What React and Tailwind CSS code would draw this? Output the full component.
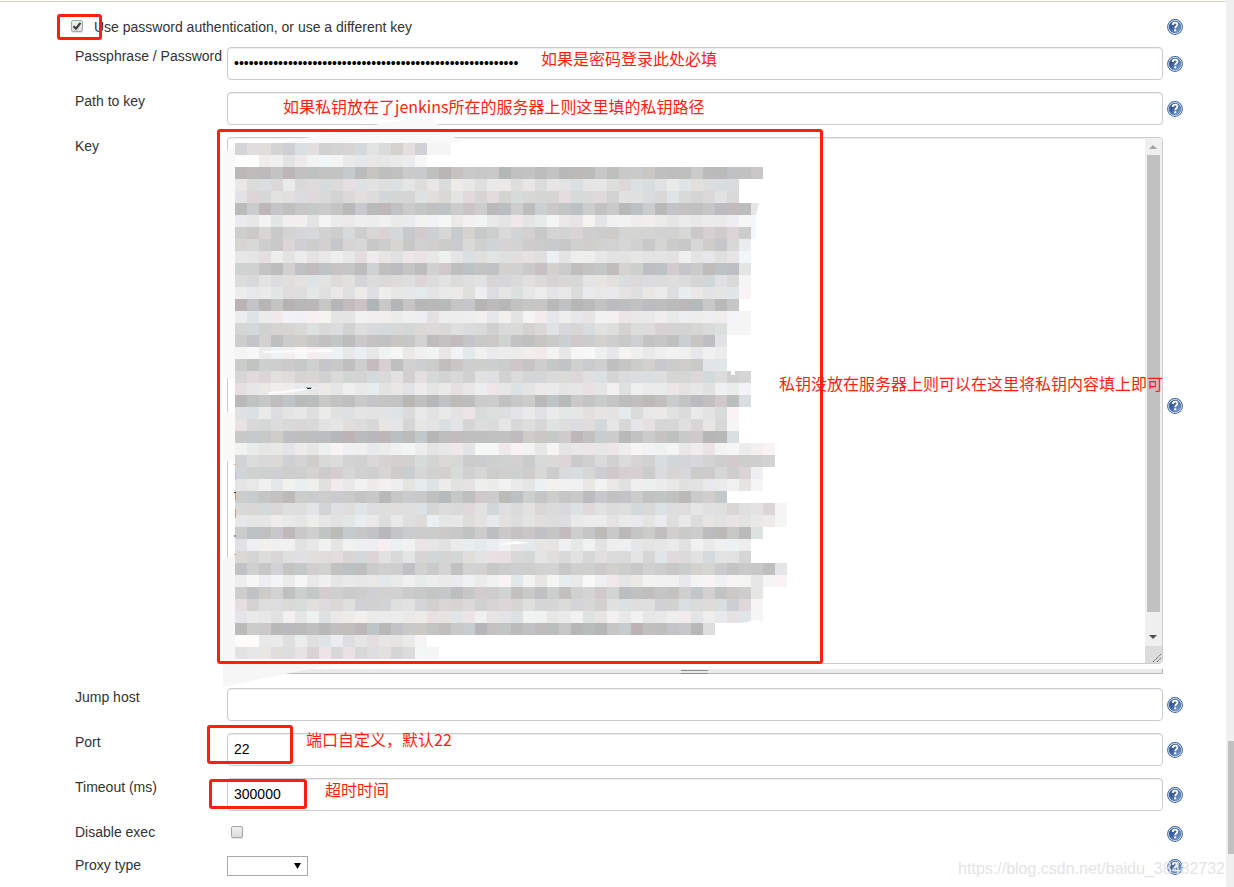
import React from "react";

const CELL = 12;

// Mosaic rows from top to bottom: [first column, column count, grey level, pale columns at the end]
const MOSAIC_ROWS = [
  [0, 18, 217, 2], [2, 14, 236, 1], [0, 44, 192, 0], [0, 42, 226, 0],
  [0, 42, 219, 0], [0, 43, 195, 0], [0, 43, 236, 0], [0, 43, 208, 0],
  [0, 43, 208, 1], [0, 43, 230, 1], [0, 43, 199, 1], [0, 43, 221, 1],
  [0, 43, 229, 1], [0, 42, 190, 0], [0, 43, 235, 2], [0, 43, 217, 2],
  [0, 41, 200, 1], [0, 41, 238, 0], [0, 41, 201, 2], [0, 43, 216, 0],
  [0, 43, 232, 1], [0, 43, 193, 1], [0, 42, 226, 1], [0, 42, 222, 1],
  [0, 42, 193, 1], [0, 45, 237, 1], [0, 45, 211, 0], [0, 44, 211, 1],
  [0, 44, 233, 1], [0, 41, 196, 0], [0, 46, 220, 1], [0, 46, 229, 1],
  [0, 44, 196, 1], [0, 43, 233, 0], [0, 43, 220, 0], [0, 46, 201, 1],
  [0, 46, 238, 2], [0, 44, 201, 1], [0, 44, 217, 1], [0, 44, 233, 1],
  [0, 40, 193, 1], [2, 14, 231, 1], [0, 17, 222, 2],
];

const TINTS = [
  [0, 0, 0], [0, 0, 0], [0, 0, 0], [1, 0, -1], [0, 0, 1], [0, 1, 0], [1, 1, 0],
  [-1, 0, 2], [0, 0, 0], [-2, 2, 1], [2, -1, 0], [-1, -1, 3], [2, 1, -3],
  [-4, 2, 3], [5, -3, -1],
];

function buildMosaic() {
  let seed = 90217;
  const next = () => {
    seed = (seed * 1103515245 + 12345) % 2147483648;
    return seed / 2147483648;
  };
  const cells = [];
  MOSAIC_ROWS.forEach(([start, count, level, pale], row) => {
    for (let i = 0; i < count; i += 1) {
      const spread = level < 205 ? 22 : 18;
      let base = level + Math.round((next() - 0.5) * spread);
      const tint = TINTS[Math.floor(next() * TINTS.length)];
      if (i >= count - pale) base = Math.min(245, level + 28);
      const rgb = tint.map((t) => Math.min(250, base + t));
      cells.push({
        key: `${row}-${i}`,
        x: 235 + (start + i) * CELL,
        y: 143 + row * CELL,
        fill: `rgb(${rgb[0]},${rgb[1]},${rgb[2]})`,
      });
    }
  });
  return cells;
}

const MOSAIC = buildMosaic();

function KeyMosaic() {
  return (
    <svg
      aria-hidden="true"
      className="pointer-events-none absolute -left-3 -top-[22px]"
      width="620"
      height="580"
      viewBox="215 115 620 580"
      shapeRendering="crispEdges"
    >
      <g shapeRendering="auto">
        <path
          d="M223 152 L229 150 Q233 144 243 144.500 Q262 146 278 143 L311 137 L363 128 Q392 120 420 119 L432 119 L442 129 L462 143 L236 143 L236 378 L223 378 Z"
          fill="#f9f9f9"
        />
        <path d="M229 151 Q233 145 243 145 Q262 146 278 143 L300 139" fill="none" stroke="#fff" />
        <path d="M223 413 L236 410 V460 L223 462 Z" fill="#f9f9f8" />
        <path d="M223 559 L236 555 V663 H340 L310 669 L223 687 Z" fill="#f7f7f7" />
      </g>
      <rect x="235" y="155" width="24" height="12" fill="#fefefd" />
      <rect x="235" y="635" width="24" height="12" fill="#fefcfa" />
      {MOSAIC.map((c) => (
        <rect key={c.key} x={c.x} y={c.y} width={CELL} height={CELL} fill={c.fill} />
      ))}
      <g shapeRendering="auto">
        <path d="M751 203 H759 L756 215 H751 Z" fill="#e4e6e6" />
        <rect x="751" y="215" width="5" height="24" fill="#f4f8fb" />
        <path d="M263 351 L332 349 V352 L264 353 Z" fill="#fbfbfb" />
        <path d="M268 392 L320 387 L300 391 L269 395 Z" fill="#fbfbfb" />
        <path d="M500 544 L516 541 L530 543 L502 545 Z" fill="#fefefe" />
        <path d="M740 623 L760 620 V623 Z" fill="#fff" />
        <rect x="731" y="371" width="4" height="4" fill="#fff" />
        <rect x="306" y="387" width="6" height="1" fill="#8fb4c4" />
        <rect x="307" y="388" width="4" height="1" fill="#222" />
        <rect x="234" y="464" width="2" height="1" fill="#d8b080" />
        <rect x="235" y="471" width="1" height="9" fill="#d9c296" />
        <rect x="234" y="492" width="2" height="1" fill="#443311" />
        <rect x="235" y="493" width="1" height="7" fill="#c49a66" />
        <rect x="235" y="509" width="1" height="9" fill="#cf9b86" />
        <rect x="234" y="535" width="2" height="2" fill="#9d8fa6" />
        <rect x="234" y="554" width="2" height="1" fill="#c8a878" />
      </g>
    </svg>
  );
}

function HelpIcon() {
  return (
    <svg className="block size-4" viewBox="0 0 16 16" aria-hidden="true">
      <defs>
        <linearGradient id="help-fill" x1="0" y1="0" x2="1" y2="1">
          <stop offset="0" stopColor="#1f4386" />
          <stop offset="0.450" stopColor="#3f66a3" />
          <stop offset="1" stopColor="#8fb0dc" />
        </linearGradient>
      </defs>
      <circle cx="8" cy="8" r="7.900" fill="#3a639f" />
      <circle cx="8" cy="8" r="6.900" fill="#f4f8ff" />
      <circle cx="8" cy="8" r="6" fill="url(#help-fill)" stroke="#3a63a2" strokeWidth="0.500" />
      <path
        d="M5.700 6.100 C5.700 4.300 6.700 3.700 8.100 3.700 C9.600 3.700 10.400 4.500 10.400 5.600 C10.400 7.200 8.200 7.300 8.200 9.200"
        fill="none"
        stroke="#fff"
        strokeWidth="1.800"
      />
      <rect x="7.200" y="10.300" width="2" height="2" fill="#fff" />
    </svg>
  );
}

function HelpLink({ topic }) {
  return (
    <a href="#help" aria-label={`Help for feature: ${topic}`} className="block shrink-0">
      <HelpIcon />
    </a>
  );
}

function Row({ id, label, children }) {
  return (
    <div className="flex">
      <label htmlFor={id} className="w-[152px] shrink-0 self-start leading-[18px] whitespace-nowrap">
        {label}
      </label>
      <div className="relative min-w-0 flex-1">{children}</div>
      <div className="ml-1 self-center pt-px">
        <HelpLink topic={label} />
      </div>
    </div>
  );
}

function TextField({ id, type = "text", value = "" }) {
  return (
    <input
      id={id}
      type={type}
      defaultValue={value}
      autoComplete="off"
      className="block h-[33px] w-full rounded-[4px] border border-[#ccc] bg-white px-1.5 pb-0.5 text-sm text-black shadow-[inset_0_1px_1px_rgba(0,0,0,0.075)] outline-none"
    />
  );
}

function CheckBox({ id, checked = false }) {
  return (
    <span className="relative block size-3">
      <input
        id={id}
        type="checkbox"
        defaultChecked={checked}
        className="peer block size-3 appearance-none rounded-[2px] border border-[#a6a6a6] bg-linear-to-b from-[#efefef] to-[#dcdcdc] shadow-[0_1px_1px_rgba(0,0,0,0.12)]"
      />
      <svg
        aria-hidden="true"
        className="pointer-events-none absolute inset-0 hidden size-3 peer-checked:block"
        viewBox="0 0 12 12"
      >
        <path d="M2.500 6.200 L5 8.700 L9.500 2.800" fill="none" stroke="#3c3c3c" strokeWidth="2.200" />
      </svg>
    </span>
  );
}

const NOTE =
  "pointer-events-none absolute z-10 whitespace-nowrap font-['Noto_Sans_CJK_SC',sans-serif] text-base leading-5 text-[#ff1e10]";
const FRAME = "pointer-events-none absolute z-10 rounded-[3px] border-3 border-[#ff1e10]";

function KeyEditor() {
  return (
    <>
      <div className="flex h-[527px] overflow-hidden rounded-[4px] border border-[#ccc] bg-white">
        <textarea
          id="key"
          className="min-w-0 flex-1 resize-none px-1.5 py-1 text-sm shadow-[inset_0_1px_1px_rgba(0,0,0,0.075)] outline-none"
        />
        <div className="flex w-[17px] flex-col bg-[#f0f0f0]" aria-hidden="true">
          <svg className="h-[17px] w-[17px]" viewBox="0 0 17 17">
            <path d="M4 11 L8 7 L12 11 Z" fill="#a3a3a3" />
          </svg>
          <div className="ml-0.5 h-[457px] w-[13px] bg-[#c1c1c1]" />
          <div className="flex-1" />
          <svg className="h-[17px] w-[17px]" viewBox="0 0 17 17">
            <path d="M4 6 L8 10 L12 6 Z" fill="#505050" />
          </svg>
          <svg className="h-[17px] w-[17px] bg-[#dcdcdc]" viewBox="0 0 17 17">
            <path d="M8 16 L16 8 M12 16 L16 12" stroke="#555" fill="none" strokeDasharray="1.400 0.600" />
          </svg>
        </div>
      </div>
      <div className="mt-[5px] flex h-[5px] justify-center border-r border-b border-[#b8b8b8] bg-[#ebebeb]">
        <div className="mt-px h-1 w-[27px] border-y border-[#8a8f85]" />
      </div>
      <KeyMosaic />
      <div className={`${FRAME} -top-2 -left-2.5 h-[535px] w-[606px]`} />
      <span className={`${NOTE} top-[236px] left-[552px]`}>
        私钥没放在服务器上则可以在这里将私钥内容填上即可
      </span>
    </>
  );
}

export default function App() {
  return (
    <div className="flex min-h-screen bg-white font-['Liberation_Sans','Noto_Sans_CJK_SC',sans-serif] text-sm text-[#333]">
      <main className="relative mt-px min-w-0 flex-1 border-t border-[#d5d6c8] pt-4 pr-[43px] pl-[75px]">
        <div className="relative mb-[11px] flex h-[18px]">
          <div className="-ml-1 flex gap-[11px]">
            <div className="pt-0.5">
              <CheckBox id="use-password" checked />
            </div>
            <label htmlFor="use-password" className="leading-[18px]">
              Use password authentication, or use a different key
            </label>
          </div>
          <div className={`${FRAME} -top-1 -left-[18px] h-[26px] w-[45px]`} />
          <div className="flex-1" />
          <div className="ml-1 self-center">
            <HelpLink topic="Use password authentication" />
          </div>
        </div>

        <div className="flex flex-col gap-3">
          <Row id="passphrase" label="Passphrase / Password">
            <TextField
              id="passphrase"
              type="password"
              value="0123456789012345678901234567890123456789012345678901234567"
            />
            <span className={`${NOTE} top-px left-[314px]`}>如果是密码登录此处必填</span>
          </Row>
          <Row id="key-path" label="Path to key">
            <TextField id="key-path" />
            <span className={`${NOTE} top-1 left-14`}>
              如果私钥放在了jenkins所在的服务器上则这里填的私钥路径
            </span>
          </Row>
          <Row id="key" label="Key">
            <KeyEditor />
          </Row>
        </div>

        <div className="mt-3.5 flex flex-col gap-3">
          <Row id="jump-host" label="Jump host">
            <TextField id="jump-host" />
          </Row>
          <Row id="port" label="Port">
            <TextField id="port" value="22" />
            <div className={`${FRAME} -top-2 -left-5 h-[39px] w-[86px]`} />
            <span className={`${NOTE} -top-1 left-[79px]`}>端口自定义，默认22</span>
          </Row>
          <Row id="timeout" label="Timeout (ms)">
            <TextField id="timeout" value="300000" />
            <div className={`${FRAME} top-px -left-[18px] h-[30px] w-[98px]`} />
            <span className={`${NOTE} top-px left-[98px]`}>超时时间</span>
          </Row>
          <Row id="disable-exec" label="Disable exec">
            <div className="h-[21px] pt-[3px] pl-1">
              <CheckBox id="disable-exec" />
            </div>
          </Row>
          <Row id="proxy-type" label="Proxy type">
            <div className="relative w-[81px]">
              <select
                id="proxy-type"
                className="block h-5 w-full appearance-none border border-[#a9a9a9] bg-white text-sm"
              >
                <option value=""></option>
                <option>HTTP</option>
                <option>SOCKS 4</option>
                <option>SOCKS 5</option>
              </select>
              <svg
                aria-hidden="true"
                className="pointer-events-none absolute top-[7px] right-[7px] h-1.5 w-[7px]"
                viewBox="0 0 7 6"
              >
                <path d="M0 0 H7 L3.500 6 Z" fill="#000" />
              </svg>
            </div>
          </Row>
        </div>

        <span className="pointer-events-none absolute right-px bottom-2 text-base leading-5 text-[#e4e4e4]">
          https://blog.csdn.net/baidu_38482732
        </span>
      </main>

      <div className="flex w-2 shrink-0 flex-col bg-[#f0f0f0]" aria-hidden="true">
        <div className="grow-741" />
        <div className="ml-0.5 grow-113 bg-[#c1c1c1]" />
        <div className="grow-33" />
      </div>
    </div>
  );
}
